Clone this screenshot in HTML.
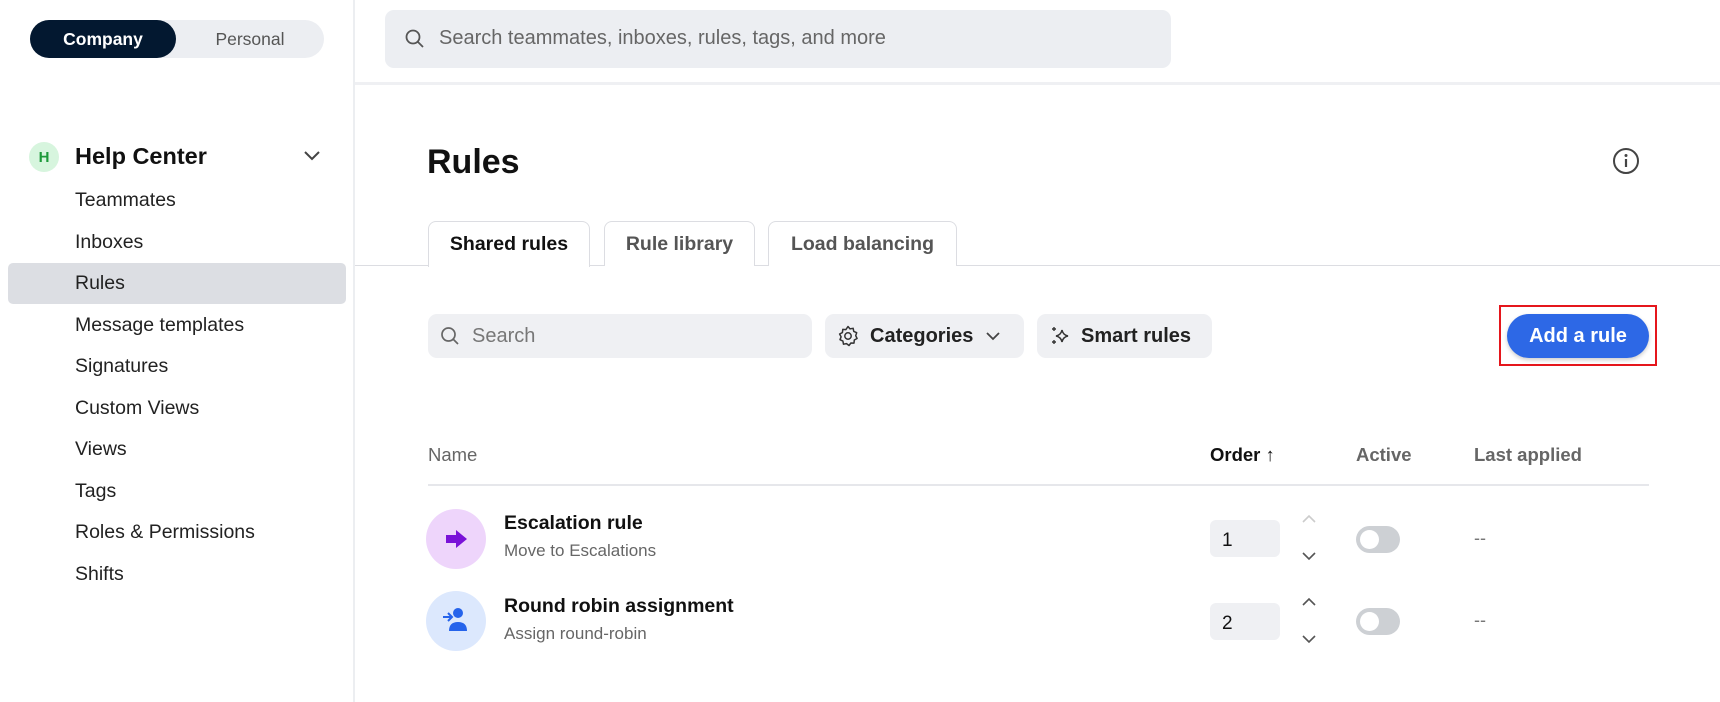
<!DOCTYPE html>
<html><head><meta charset="utf-8"><style>
*{box-sizing:border-box;margin:0;padding:0}
body{width:1720px;height:702px;background:#fff;font-family:"Liberation Sans",sans-serif;color:#111;position:relative;overflow:hidden}
.a{position:absolute}
.nav{position:absolute;left:75px;font-size:19.5px;color:#222}
.gray{background:#eff0f3}
.tab{position:absolute;top:221px;height:45px;border:1px solid #dcdde2;border-bottom:none;border-radius:8px 8px 0 0;font-size:19.5px;font-weight:bold;color:#555;display:flex;align-items:center;justify-content:center;background:#fff}
.btn{position:absolute;top:314px;height:44px;border-radius:9px;background:#eff0f3;display:flex;align-items:center;font-size:20px;color:#222;font-weight:bold}
.th{position:absolute;top:444px;font-size:18.5px;font-weight:bold;color:#666}
</style></head><body>
<!-- sidebar -->
<div class="a" style="left:353px;top:0;width:2px;height:702px;background:#eceef1"></div>
<div class="a gray" style="left:30px;top:20px;width:294px;height:38px;border-radius:19px;background:#eceef2"></div>
<div class="a" style="left:30px;top:20px;width:146px;height:38px;border-radius:19px;background:#031830;color:#fff;font-weight:bold;font-size:17.5px;display:flex;align-items:center;justify-content:center">Company</div>
<div class="a" style="left:176px;top:20px;width:148px;height:38px;color:#555;font-size:17.5px;display:flex;align-items:center;justify-content:center">Personal</div>
<div class="a" style="left:29px;top:142px;width:30px;height:30px;border-radius:50%;background:#d7f5de;color:#1d9a3a;font-weight:bold;font-size:15px;display:flex;align-items:center;justify-content:center">H</div>
<div class="a" style="left:75px;top:143px;font-size:23.5px;font-weight:bold">Help Center</div>
<svg class="a" style="left:302px;top:149px" width="20" height="14"><path d="M3 3l7 7 7-7" fill="none" stroke="#444" stroke-width="2"/></svg>
<div class="a" style="left:8px;top:263px;width:338px;height:41px;border-radius:5px;background:#dcdee3"></div>
<div class="nav" style="top:189px">Teammates</div>
<div class="nav" style="top:231px">Inboxes</div>
<div class="nav" style="top:272px">Rules</div>
<div class="nav" style="top:314px">Message templates</div>
<div class="nav" style="top:355px">Signatures</div>
<div class="nav" style="top:397px">Custom Views</div>
<div class="nav" style="top:438px">Views</div>
<div class="nav" style="top:480px">Tags</div>
<div class="nav" style="top:521px">Roles &amp; Permissions</div>
<div class="nav" style="top:563px">Shifts</div>
<!-- top bar -->
<div class="a" style="left:385px;top:10px;width:786px;height:58px;border-radius:9px;background:#eceef2"></div>
<svg class="a" style="left:404px;top:28px" width="22" height="22"><circle cx="9" cy="9" r="6.5" fill="none" stroke="#555" stroke-width="1.8"/><path d="M14 14l5 5" stroke="#555" stroke-width="1.8"/></svg>
<div class="a" style="left:439px;top:27px;font-size:20px;color:#666">Search teammates, inboxes, rules, tags, and more</div>
<div class="a" style="left:355px;top:82px;width:1365px;height:3px;background:#eff0f3"></div>
<!-- title -->
<div class="a" style="left:427px;top:143px;font-size:34px;font-weight:bold">Rules</div>
<svg class="a" style="left:1612px;top:147px" width="28" height="28"><circle cx="14" cy="14" r="12" fill="none" stroke="#444" stroke-width="2"/><circle cx="14" cy="8.5" r="1.5" fill="#444"/><path d="M14 12v8" stroke="#444" stroke-width="2.2"/></svg>
<!-- tabs -->
<div class="a" style="left:355px;top:265px;width:1365px;height:1px;background:#dcdde2"></div>
<div class="tab" style="left:428px;width:162px;height:46px;color:#111">Shared rules</div>
<div class="tab" style="left:604px;width:151px">Rule library</div>
<div class="tab" style="left:768px;width:189px">Load balancing</div>
<!-- toolbar -->
<div class="btn" style="left:428px;width:384px;font-weight:normal;color:#777"><svg style="margin:0 12px 0 12px" width="20" height="20"><circle cx="8.5" cy="8.5" r="6.5" fill="none" stroke="#666" stroke-width="1.7"/><path d="M13 13l5 5" stroke="#666" stroke-width="1.7"/></svg>Search</div>
<div class="btn" style="left:825px;width:199px"><svg style="margin:0 10px 0 11px" width="24" height="24" viewBox="0 0 24 24"><path d="M12 2.5l2 2.4 3.1-.6.7 3.1 2.9 1.3-1 3 1.4 2.8-2.8 1.5-.3 3.1-3.1-.1-1.9 2.5-2.5-1.9-3 .6-.6-3.1-2.9-1.4 1.1-2.9-1.5-2.8 2.8-1.4.4-3.2 3.1.2z" fill="none" stroke="#333" stroke-width="1.5" stroke-linejoin="round"/><circle cx="12" cy="12" r="3.2" fill="none" stroke="#333" stroke-width="1.5"/></svg>Categories<svg style="margin-left:12px" width="16" height="12"><path d="M2 3l6 6 6-6" fill="none" stroke="#444" stroke-width="1.8"/></svg></div>
<div class="btn" style="left:1037px;width:175px"><svg style="margin:0 10px 0 12px" width="22" height="22" viewBox="0 0 22 22"><path d="M13 5q1 5 6 6q-5 1-6 6q-1-5-6-6q5-1 6-6z" fill="none" stroke="#333" stroke-width="1.5"/><path d="M5 2v4M3 4h4M5 15v4M3 17h4" stroke="#333" stroke-width="1.4"/></svg>Smart rules</div>
<div class="a" style="left:1499px;top:305px;width:158px;height:61px;border:2px solid #e5161c"></div>
<div class="a" style="left:1507px;top:314px;width:142px;height:44px;border-radius:22px;background:#2d68e6;color:#fff;font-size:20px;font-weight:bold;display:flex;align-items:center;justify-content:center;box-shadow:0 2px 4px rgba(0,0,0,.2)">Add a rule</div>
<!-- table header -->
<div class="th" style="left:428px;font-weight:normal">Name</div>
<div class="th" style="left:1210px;color:#111">Order ↑</div>
<div class="th" style="left:1356px">Active</div>
<div class="th" style="left:1474px">Last applied</div>
<div class="a" style="left:428px;top:484px;width:1221px;height:2px;background:#e6e7eb"></div>
<!-- row1 -->
<div class="a" style="left:426px;top:509px;width:60px;height:60px;border-radius:50%;background:#eed5fb"></div>
<svg class="a" style="left:444px;top:528px" width="26" height="22"><path d="M2 7h10V2l11 9-11 9v-5H2z" fill="#7a12d8"/></svg>
<div class="a" style="left:504px;top:512px;font-size:19.5px;font-weight:bold">Escalation rule</div>
<div class="a" style="left:504px;top:541px;font-size:17px;color:#666">Move to Escalations</div>
<div class="a gray" style="left:1210px;top:520px;width:70px;height:37px;border-radius:6px;font-size:19px;padding:10px 0 0 12px">1</div>
<svg class="a" style="left:1300px;top:512px" width="18" height="54"><path d="M3 10l6-6 6 6" fill="none" stroke="#ccc" stroke-width="1.6"/><path d="M3 41l6 6 6-6" fill="none" stroke="#555" stroke-width="1.6"/></svg>
<div class="a" style="left:1356px;top:526px;width:44px;height:27px;border-radius:14px;background:#cdd0d4"><div style="margin:4px;width:19px;height:19px;border-radius:50%;background:#fff"></div></div>
<div class="a" style="left:1474px;top:528px;font-size:18px;color:#777">--</div>
<!-- row2 -->
<div class="a" style="left:426px;top:591px;width:60px;height:60px;border-radius:50%;background:#dce8fd"></div>
<svg class="a" style="left:440px;top:606px" width="32" height="30" viewBox="0 0 32 30"><circle cx="18" cy="7" r="5" fill="#2563eb"/><path d="M9 25q0-9 9-9t9 9z" fill="#2563eb"/><path d="M3 11h8M8 7l4 4-4 4" fill="none" stroke="#2563eb" stroke-width="2"/></svg>
<div class="a" style="left:504px;top:595px;font-size:19.5px;font-weight:bold">Round robin assignment</div>
<div class="a" style="left:504px;top:624px;font-size:17px;color:#666">Assign round-robin</div>
<div class="a gray" style="left:1210px;top:603px;width:70px;height:37px;border-radius:6px;font-size:19px;padding:10px 0 0 12px">2</div>
<svg class="a" style="left:1300px;top:595px" width="18" height="54"><path d="M3 10l6-6 6 6" fill="none" stroke="#555" stroke-width="1.6"/><path d="M3 41l6 6 6-6" fill="none" stroke="#555" stroke-width="1.6"/></svg>
<div class="a" style="left:1356px;top:608px;width:44px;height:27px;border-radius:14px;background:#cdd0d4"><div style="margin:4px;width:19px;height:19px;border-radius:50%;background:#fff"></div></div>
<div class="a" style="left:1474px;top:610px;font-size:18px;color:#777">--</div>
</body></html>
